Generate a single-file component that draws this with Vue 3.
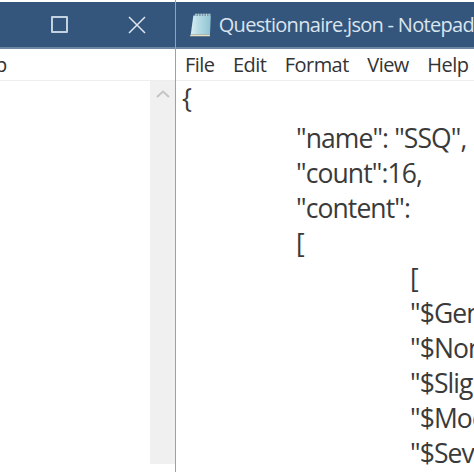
<script setup>
const lines = [
  { text: '{', indent: 0 },
  { text: '"name": "SSQ",', indent: 1 },
  { text: '"count":16,', indent: 1 },
  { text: '"content":', indent: 1 },
  { text: '[', indent: 1 },
  { text: '[', indent: 2 },
  { text: '"$General', indent: 2 },
  { text: '"$None', indent: 2 },
  { text: '"$Slight', indent: 2 },
  { text: '"$Moderate', indent: 2 },
  { text: '"$Severe', indent: 2 },
]
const menu = ['File', 'Edit', 'Format', 'View', 'Help']
</script>

<template>
  <div class="screen">
    <section class="left">
      <header class="bar left-bar">
        <span class="max"></span>
        <svg class="close" width="18" height="18" viewBox="0 0 18 18">
          <path d="M1 1 L17 17 M17 1 L1 17" stroke="#dfe7ef" stroke-width="1.5" fill="none" />
        </svg>
      </header>
      <div class="menu left-menu"><span class="cut">p</span></div>
      <div class="left-body">
        <div class="scroll">
          <svg width="14" height="8" viewBox="0 0 14 8">
            <path d="M1 7 L7 1.5 L13 7" stroke="#c4c4c4" stroke-width="2" fill="none" />
          </svg>
        </div>
      </div>
    </section>
    <section class="right">
      <header class="bar right-bar">
        <svg class="note" width="25" height="26" viewBox="0 0 26 28">
          <defs>
            <linearGradient id="page" x1="0" y1="0" x2="1" y2="0">
              <stop offset="0" stop-color="#d8edf2" />
              <stop offset="0.35" stop-color="#b9dde6" />
              <stop offset="1" stop-color="#8fc3d3" />
            </linearGradient>
          </defs>
          <path d="M5 3 H25 L24 25 H2 Z" fill="url(#page)" />
          <path d="M2 25 H24 L24 27 H1 Z" fill="#e6dfc0" />
          <path d="M6 3 H25 V1 H7 Z" fill="#7e9fb4" />
          <path d="M8 1 V4 M11 1 V4 M14 1 V4 M17 1 V4 M20 1 V4 M23 1 V4" stroke="#c9dbe4" stroke-width="1" fill="none" />
        </svg>
        <span class="title">Questionnaire.json - Notepad</span>
      </header>
      <nav class="menu right-menu">
        <span v-for="m in menu" :key="m">{{ m }}</span>
      </nav>
      <div class="doc">
        <div v-for="(l, i) in lines" :key="i" class="line" :class="'indent' + l.indent">{{ l.text }}</div>
      </div>
    </section>
  </div>
</template>

<style scoped>
.screen {
  width: 474px;
  height: 474px;
  display: flex;
  overflow: hidden;
  background: #fff;
  font-family: "Open Sans", "Noto Sans", sans-serif;
  color: #333;
}
.left {
  width: 175px;
  flex: none;
  display: flex;
  flex-direction: column;
}
.right {
  flex: 1;
  min-width: 0;
  display: flex;
  flex-direction: column;
  border-left: 1px solid #8fa3bb;
  margin-bottom: 2px;
  overflow: hidden;
}
.bar {
  height: 45px;
  margin-top: 2px;
  background: #34567d;
  border-bottom: 2px solid #6d86a3;
  display: flex;
  align-items: center;
  flex: none;
}
.left-bar {
  justify-content: flex-end;
  gap: 60px;
  padding-right: 29px;
}
.max {
  width: 13px;
  height: 13px;
  border: 2px solid #c3d2e0;
  border-radius: 1px;
}
.right-bar {
  padding-left: 13px;
  gap: 7px;
}
.title {
  color: #dbe5ee;
  font-size: 20px;
  white-space: nowrap;
  letter-spacing: -0.7px;
}
.menu {
  height: 31px;
  flex: none;
  border-bottom: 1px solid #eee;
  font-size: 20px;
  display: flex;
  align-items: center;
  letter-spacing: -0.55px;
}
.cut {
  margin-left: -5px;
}
.right-menu {
  padding-left: 9px;
  gap: 18.5px;
}
.left-body {
  flex: 1;
  display: flex;
  justify-content: flex-end;
  padding-bottom: 10px;
}
.scroll {
  width: 25px;
  background: #f0f0f0;
  display: flex;
  justify-content: center;
  padding-top: 9px;
  align-items: flex-start;
}
.doc {
  font-size: 26.5px;
  line-height: 35px;
  padding-left: 6px;
  white-space: nowrap;
  letter-spacing: -0.9px;
  color: #3a3a3a;
}
.line:first-child {
  margin-bottom: 4.5px;
}
.indent1 {
  padding-left: 114px;
}
.indent2 {
  padding-left: 228px;
}
</style>

<style>
body {
  margin: 0;
  background: #fff;
}
</style>
